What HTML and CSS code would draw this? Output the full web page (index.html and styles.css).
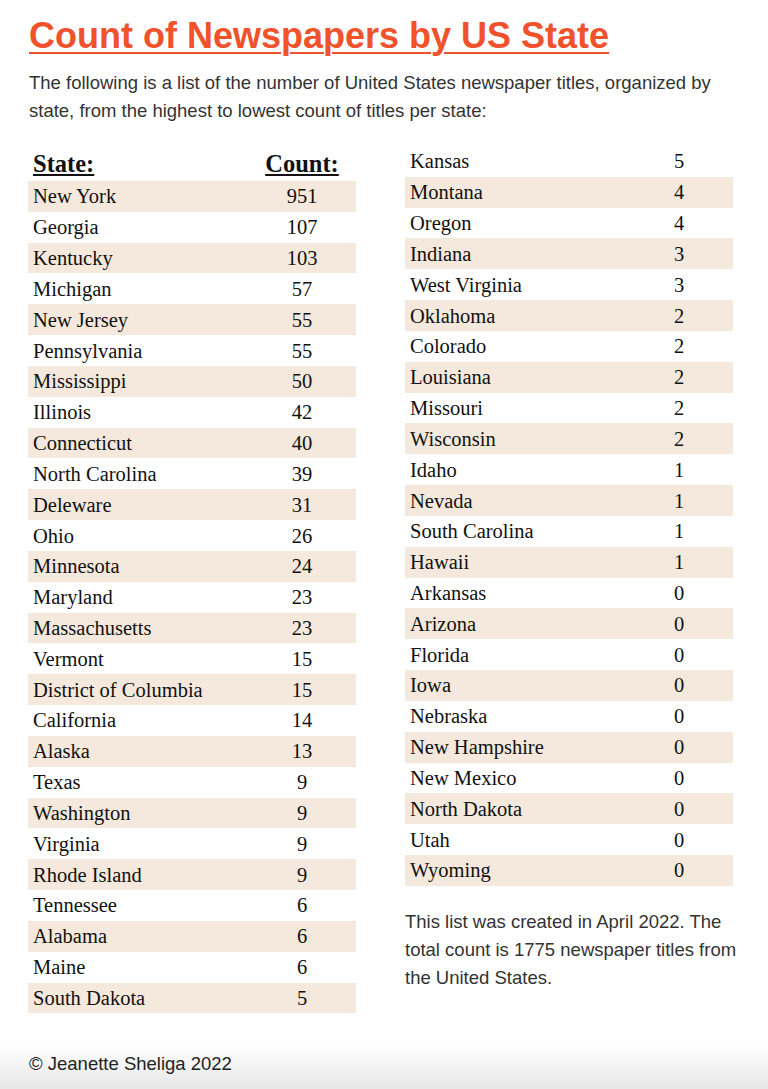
FILE: index.html
```html
<!DOCTYPE html>
<html lang="en">
<head>
<meta charset="utf-8">
<title>Count of Newspapers by US State</title>
<link rel="stylesheet" href="styles.css">
</head>
<body>
<main class="page">
  <h1 class="title"><a href="#">Count of Newspapers by US State</a></h1>
  <p class="intro">The following is a list of the number of United States newspaper titles, organized by state, from the highest to lowest count of titles per state:</p>
  <div class="columns">
    <div class="col">
      <table class="counts">
        <thead>
          <tr><th class="state">State:</th><th class="num">Count:</th></tr>
        </thead>
        <tbody>
          <tr class="alt"><td class="state">New York</td><td class="num">951</td></tr>
          <tr><td class="state">Georgia</td><td class="num">107</td></tr>
          <tr class="alt"><td class="state">Kentucky</td><td class="num">103</td></tr>
          <tr><td class="state">Michigan</td><td class="num">57</td></tr>
          <tr class="alt"><td class="state">New Jersey</td><td class="num">55</td></tr>
          <tr><td class="state">Pennsylvania</td><td class="num">55</td></tr>
          <tr class="alt"><td class="state">Mississippi</td><td class="num">50</td></tr>
          <tr><td class="state">Illinois</td><td class="num">42</td></tr>
          <tr class="alt"><td class="state">Connecticut</td><td class="num">40</td></tr>
          <tr><td class="state">North Carolina</td><td class="num">39</td></tr>
          <tr class="alt"><td class="state">Deleware</td><td class="num">31</td></tr>
          <tr><td class="state">Ohio</td><td class="num">26</td></tr>
          <tr class="alt"><td class="state">Minnesota</td><td class="num">24</td></tr>
          <tr><td class="state">Maryland</td><td class="num">23</td></tr>
          <tr class="alt"><td class="state">Massachusetts</td><td class="num">23</td></tr>
          <tr><td class="state">Vermont</td><td class="num">15</td></tr>
          <tr class="alt"><td class="state">District of Columbia</td><td class="num">15</td></tr>
          <tr><td class="state">California</td><td class="num">14</td></tr>
          <tr class="alt"><td class="state">Alaska</td><td class="num">13</td></tr>
          <tr><td class="state">Texas</td><td class="num">9</td></tr>
          <tr class="alt"><td class="state">Washington</td><td class="num">9</td></tr>
          <tr><td class="state">Virginia</td><td class="num">9</td></tr>
          <tr class="alt"><td class="state">Rhode Island</td><td class="num">9</td></tr>
          <tr><td class="state">Tennessee</td><td class="num">6</td></tr>
          <tr class="alt"><td class="state">Alabama</td><td class="num">6</td></tr>
          <tr><td class="state">Maine</td><td class="num">6</td></tr>
          <tr class="alt"><td class="state">South Dakota</td><td class="num">5</td></tr>
        </tbody>
      </table>
    </div>
    <div class="col col-right">
      <table class="counts">
        <tbody>
          <tr><td class="state">Kansas</td><td class="num">5</td></tr>
          <tr class="alt"><td class="state">Montana</td><td class="num">4</td></tr>
          <tr><td class="state">Oregon</td><td class="num">4</td></tr>
          <tr class="alt"><td class="state">Indiana</td><td class="num">3</td></tr>
          <tr><td class="state">West Virginia</td><td class="num">3</td></tr>
          <tr class="alt"><td class="state">Oklahoma</td><td class="num">2</td></tr>
          <tr><td class="state">Colorado</td><td class="num">2</td></tr>
          <tr class="alt"><td class="state">Louisiana</td><td class="num">2</td></tr>
          <tr><td class="state">Missouri</td><td class="num">2</td></tr>
          <tr class="alt"><td class="state">Wisconsin</td><td class="num">2</td></tr>
          <tr><td class="state">Idaho</td><td class="num">1</td></tr>
          <tr class="alt"><td class="state">Nevada</td><td class="num">1</td></tr>
          <tr><td class="state">South Carolina</td><td class="num">1</td></tr>
          <tr class="alt"><td class="state">Hawaii</td><td class="num">1</td></tr>
          <tr><td class="state">Arkansas</td><td class="num">0</td></tr>
          <tr class="alt"><td class="state">Arizona</td><td class="num">0</td></tr>
          <tr><td class="state">Florida</td><td class="num">0</td></tr>
          <tr class="alt"><td class="state">Iowa</td><td class="num">0</td></tr>
          <tr><td class="state">Nebraska</td><td class="num">0</td></tr>
          <tr class="alt"><td class="state">New Hampshire</td><td class="num">0</td></tr>
          <tr><td class="state">New Mexico</td><td class="num">0</td></tr>
          <tr class="alt"><td class="state">North Dakota</td><td class="num">0</td></tr>
          <tr><td class="state">Utah</td><td class="num">0</td></tr>
          <tr class="alt"><td class="state">Wyoming</td><td class="num">0</td></tr>
        </tbody>
      </table>
      <p class="note">This list was created in April 2022. The total count is 1775 newspaper titles from the United States.</p>
    </div>
  </div>
  <footer class="footer">© Jeanette Sheliga 2022</footer>
</main>
</body>
</html>
```
FILE: styles.css
```css
html, body {
  margin: 0;
  padding: 0;
  background: #ffffff;
}
body {
  font-family: "Liberation Sans", Arial, Helvetica, sans-serif;
  color: #333333;
  min-height: 1089px;
  background: linear-gradient(to bottom, #ffffff 0, #ffffff 1045px, #e6e6e6 1089px);
}
.page {
  padding: 0 0 0 29px;
}
.title {
  margin: 0;
  padding-top: 15px;
  font-size: 36px;
  line-height: 42px;
  font-weight: 700;
}
.title a {
  color: #f0522c;
  text-decoration: underline;
  text-decoration-thickness: 2px;
  text-underline-offset: 4px;
}
.intro {
  margin: 12px 0 0 0;
  width: 700px;
  font-size: 18.5px;
  line-height: 28px;
  color: #333333;
}
.columns {
  display: grid;
  grid-template-columns: 328px 328px;
  column-gap: 49px;
  margin-top: 23px;
  margin-left: -1px;
}
.counts {
  width: 328px;
  border-collapse: collapse;
  font-family: "Liberation Serif", "Times New Roman", serif;
  color: #111111;
  font-size: 20.5px;
}
.counts td {
  height: 30.84px;
  padding: 0 5px;
  box-sizing: border-box;
  line-height: 22px;
  vertical-align: middle;
}
.counts th {
  height: 33px;
  padding: 0 5px 4px 5px;
  box-sizing: border-box;
  font-size: 24.5px;
  font-weight: 700;
  text-decoration: underline;
  line-height: 26px;
  vertical-align: bottom;
  color: #111111;
}
.counts .state {
  text-align: left;
}
.counts .num {
  width: 108px;
  text-align: center;
  box-sizing: border-box;
}
.counts tr.alt {
  background: #f4e9dc;
}
.col-right .counts {
  margin-top: -2px;
}
.note {
  margin: 22px 0 0 0;
  width: 340px;
  font-size: 18.5px;
  line-height: 28px;
  color: #333333;
}
.footer {
  margin-top: 39px;
  font-size: 18.5px;
  line-height: 24px;
  color: #222222;
}
```
